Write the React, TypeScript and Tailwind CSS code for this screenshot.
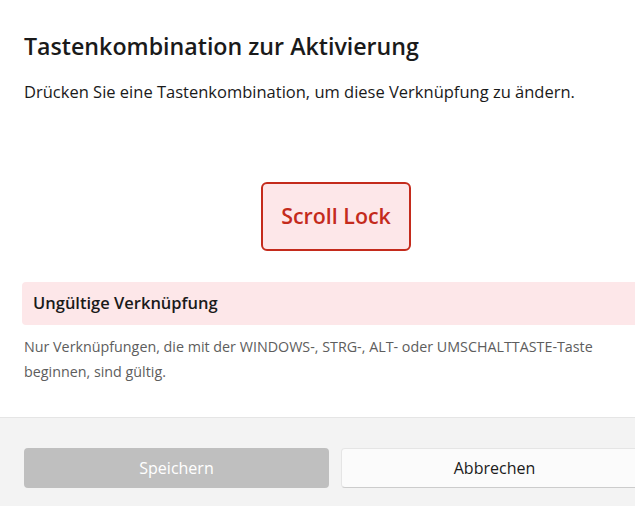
export default function App() {
  const font = { fontFamily: '"Open Sans", "Noto Sans", sans-serif' };
  return (
    <div className="w-[635px] h-[506px] overflow-hidden bg-white">
      <div className="w-[672px] h-[506px] flex flex-col" style={font}>
        <div className="flex-1 px-6 pt-[30px] flex flex-col">
          <h1 className="text-[23.2px] leading-[32px] font-semibold text-[#1a1a1a]">
            Tastenkombination zur Aktivierung
          </h1>
          <p className="mt-[18px] text-[16.5px] leading-[24px] text-[#1a1a1a]">
            Drücken Sie eine Tastenkombination, um diese Verknüpfung zu ändern.
          </p>
          <div className="mt-[78px] flex justify-center">
            <div className="w-[150px] h-[69px] flex items-center justify-center rounded-md border-2 border-[#c42b1c] bg-[#fde7e9] text-[#c42b1c] text-[21.4px] font-semibold">
              Scroll Lock
            </div>
          </div>
          <div className="mt-[31px] -mx-[2px] h-[43px] rounded-[4px] bg-[#fde7e9] flex items-center px-[11px] text-[16.5px] font-semibold text-[#1a1a1a]">
            Ungültige Verknüpfung
          </div>
          <p className="mt-[9px] text-[14.3px] leading-[25px] text-[#5d5d5d]">
            Nur Verknüpfungen, die mit der WINDOWS-, STRG-, ALT- oder UMSCHALTTASTE-Taste beginnen, sind gültig.
          </p>
        </div>
        <div className="h-[89px] border-t border-[#e5e5e5] bg-[#f3f3f3] px-6 pt-[30px] flex gap-3">
          <button className="flex-1 h-10 rounded-[4px] bg-[#bfbfbf] text-white text-[16px]">
            Speichern
          </button>
          <button className="flex-1 h-10 rounded-[4px] bg-[#fbfbfb] border border-[#e5e5e5] border-b-[#cccccc] text-[#1a1a1a] text-[16px]">
            Abbrechen
          </button>
        </div>
      </div>
    </div>
  );
}
